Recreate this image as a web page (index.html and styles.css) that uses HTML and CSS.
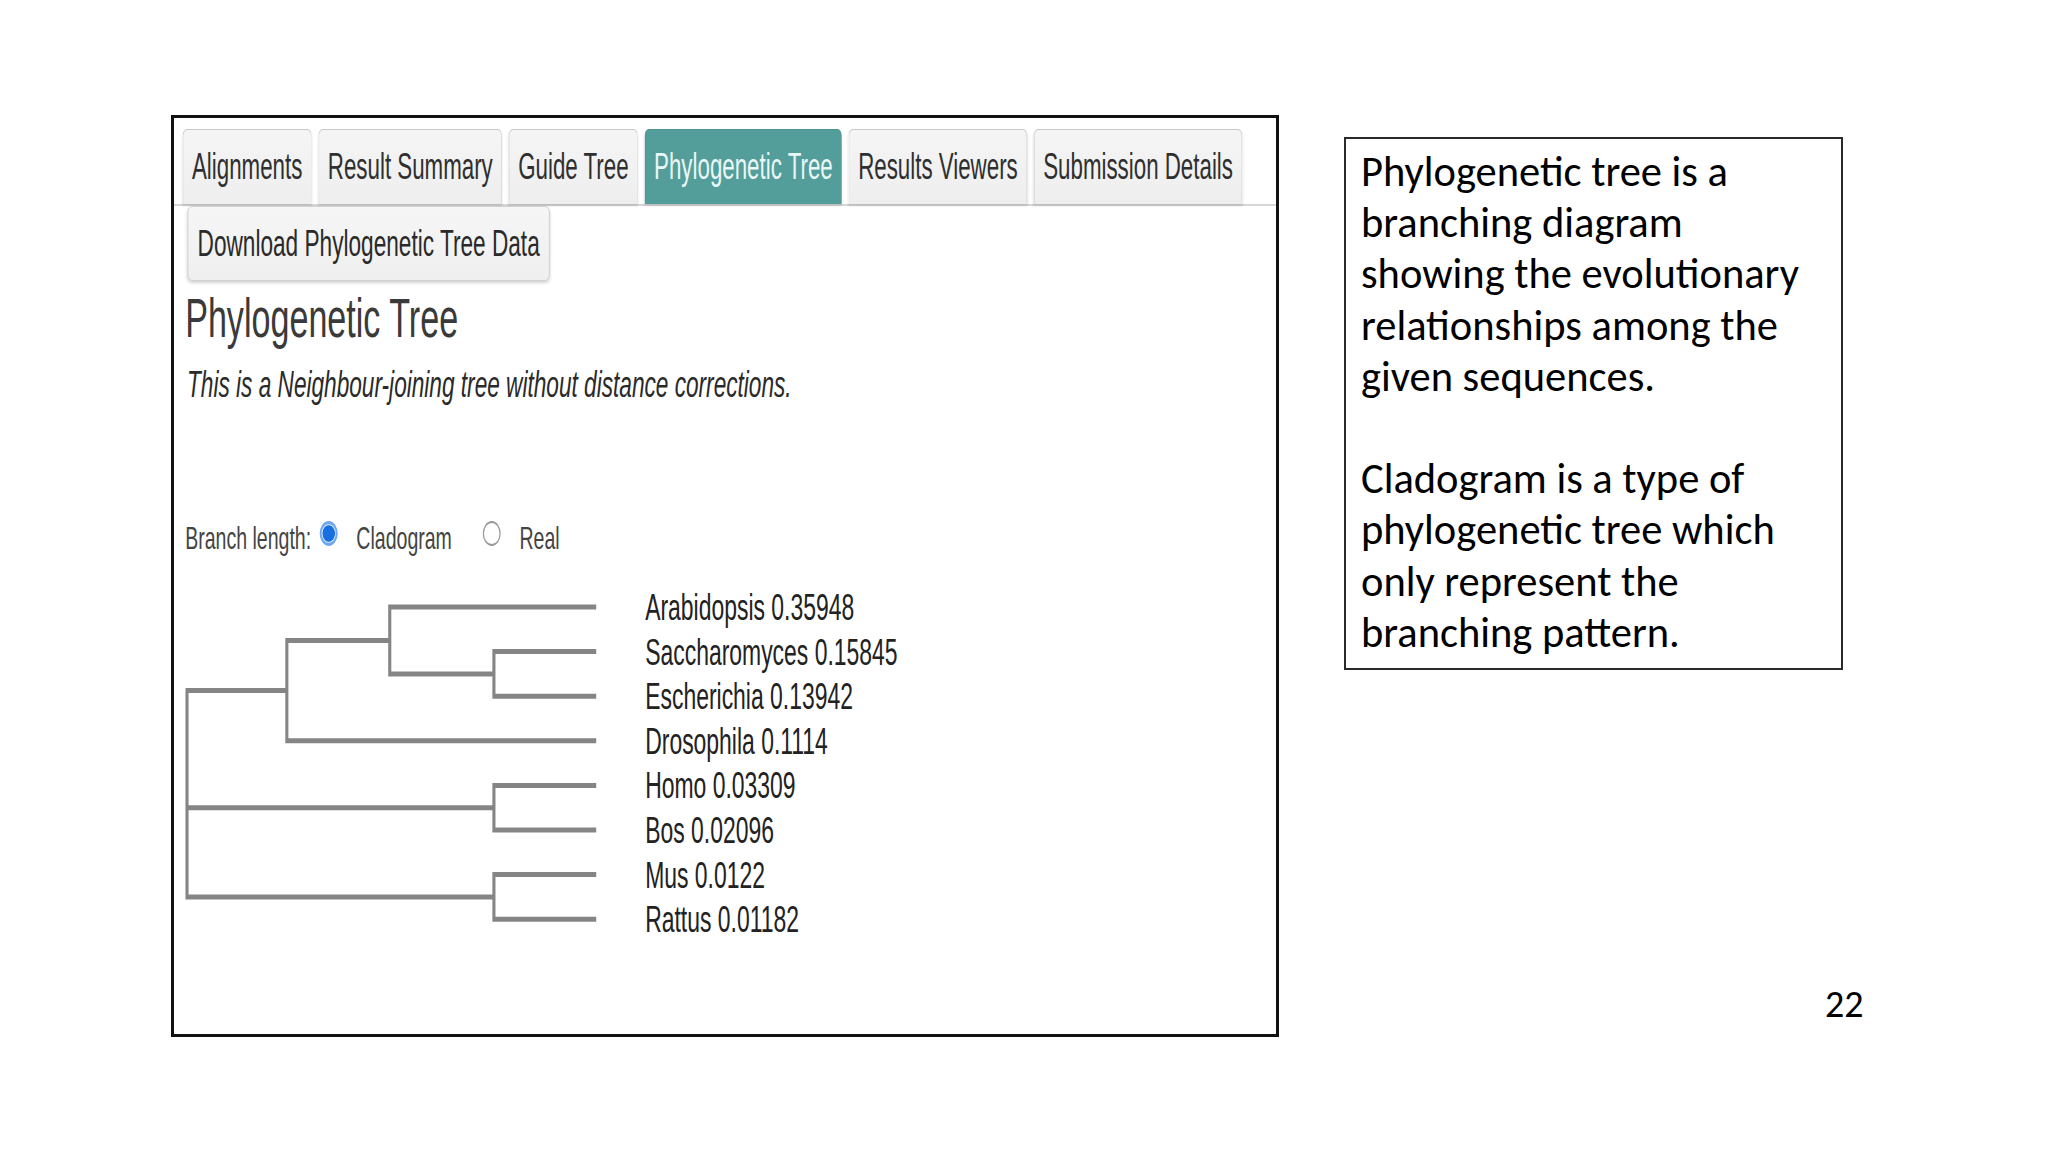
FILE: index.html
```html
<!DOCTYPE html>
<html lang="en">
<head>
<meta charset="utf-8">
<title>Phylogenetic Tree</title>
<link rel="stylesheet" href="styles.css">
</head>
<body>
<div class="slide">
  <div class="row">
    <div class="shot">
      <div class="app">
        <ul class="tabs">
          <li class="tab">Alignments</li>
          <li class="tab">Result Summary</li>
          <li class="tab">Guide Tree</li>
          <li class="tab active">Phylogenetic Tree</li>
          <li class="tab">Results Viewers</li>
          <li class="tab">Submission Details</li>
        </ul>
        <div class="dl">Download Phylogenetic Tree Data</div>
        <h1 class="title">Phylogenetic Tree</h1>
        <p class="sub">This is a Neighbour-joining tree without distance corrections.</p>
        <div class="branch">
          <span class="blabel">Branch length:</span>
          <span class="radio on"></span>
          <span class="opt">Cladogram</span>
          <span class="radio"></span>
          <span class="opt">Real</span>
        </div>
        <svg class="tree" width="1400" height="400" viewBox="0 0 1400 400">
          <g class="edges">
            <path d="M681 91.6 H516 V136.2 H681"/>
            <path d="M681 47 H348 V113.9 H516"/>
            <path d="M348 80.5 H182 V180.8 H681"/>
            <path d="M182 130.6 H21 V336.9 H516"/>
            <path d="M21 247.7 H516"/>
            <path d="M681 225.4 H516 V270 H681"/>
            <path d="M681 314.6 H516 V359.2 H681"/>
          </g>
          <g class="labels">
            <text x="760" y="60">Arabidopsis 0.35948</text>
            <text x="760" y="104.6">Saccharomyces 0.15845</text>
            <text x="760" y="149.2">Escherichia 0.13942</text>
            <text x="760" y="193.8">Drosophila 0.1114</text>
            <text x="760" y="238.4">Homo 0.03309</text>
            <text x="760" y="283">Bos 0.02096</text>
            <text x="760" y="327.6">Mus 0.0122</text>
            <text x="760" y="372.2">Rattus 0.01182</text>
          </g>
        </svg>
      </div>
    </div>
    <div class="note">
      <p>Phylogenetic tree is a<br>branching diagram<br>showing the evolutionary<br>relationships among the<br>given sequences.</p>
      <p class="gap">Cladogram is a type of<br>phylogenetic tree which<br>only represent the<br>branching pattern.</p>
    </div>
  </div>
  <div class="pagenum">22</div>
</div>
</body>
</html>
```
FILE: styles.css
```css
html, body {
  margin: 0;
  background: #ffffff;
}

.slide {
  position: relative;
  width: 2048px;
  height: 1152px;
  box-sizing: border-box;
  padding: 115px 0 0 171px;
  overflow: hidden;
}

.row {
  display: flex;
  align-items: flex-start;
  gap: 65px;
}

/* screenshot frame */
.shot {
  width: 1108px;
  height: 922px;
  box-sizing: border-box;
  border: 3px solid #111111;
  overflow: hidden;
  background: #ffffff;
}

.app {
  width: 1777px;
  transform: scaleX(0.62);
  transform-origin: 0 0;
  padding-top: 11px;
  font-family: "Liberation Sans", Arial, sans-serif;
  color: #333333;
}

.tabs {
  display: flex;
  gap: 11px;
  height: 75px;
  margin: 0;
  padding: 0 0 0 14px;
  list-style: none;
  border-bottom: 2px solid #d6d6d6;
}

.tab {
  height: 75px;
  box-sizing: border-box;
  padding: 0 14px;
  border: 1px solid #c8c8c8;
  border-bottom: none;
  border-radius: 7px 7px 0 0;
  background: linear-gradient(#f5f5f5, #eeeeee);
  font-size: 36px;
  line-height: 74px;
  color: #2f2f2f;
  white-space: nowrap;
  box-shadow: 0 2px 3px rgba(0, 0, 0, 0.12);
}

.tab.active {
  background: #539e9a;
  border-color: #4b928e;
  color: #e9f7f6;
}

.dl {
  display: inline-block;
  margin-left: 22px;
  height: 75px;
  box-sizing: border-box;
  padding: 0 15px;
  border: 1px solid #c6c6c6;
  border-radius: 7px;
  background: linear-gradient(#f6f6f6, #efefef);
  font-size: 36.5px;
  line-height: 73px;
  color: #2a2a2a;
  white-space: nowrap;
  box-shadow: 0 2px 4px rgba(0, 0, 0, 0.18);
  vertical-align: top;
}

.title {
  margin: 7px 0 0 18px;
  font-size: 55px;
  line-height: 60px;
  font-weight: normal;
  color: #3a3a3a;
}

.sub {
  margin: 17px 0 0 21px;
  font-size: 36.5px;
  line-height: 40px;
  font-style: italic;
  color: #2a2a2a;
}

.branch {
  display: flex;
  align-items: center;
  height: 36px;
  margin: 115px 0 0 18px;
  font-size: 31.5px;
  line-height: 36px;
  color: #444444;
}

.radio {
  width: 29px;
  height: 25px;
  box-sizing: border-box;
  border-radius: 50%;
  border: 2px solid #9a9a9a;
  background: #ffffff;
  margin: -9px 30px 0 14px;
}

.radio + .opt + .radio {
  margin-left: 50px;
}

.radio.on {
  border: 3px solid #6fa8f2;
  background: radial-gradient(ellipse, #1a6fe0 0 58%, #cfe2fb 64% 100%);
}

.tree {
  display: block;
  margin-top: 4px;
}

.edges path {
  fill: none;
  stroke: #858585;
  stroke-width: 5;
  stroke-linejoin: miter;
}

.labels text {
  font-family: "Liberation Sans", Arial, sans-serif;
  font-size: 37px;
  fill: #222222;
}

/* explanatory note box */
.note {
  margin-top: 22px;
  width: 499px;
  height: 533px;
  box-sizing: border-box;
  border: 2px solid #2a2a2a;
  padding: 7px 0 0 15px;
  font-family: Carlito, Lato, "Open Sans", sans-serif;
  font-size: 42.5px;
  line-height: 51.2px;
  color: #000000;
  white-space: nowrap;
}

.note p {
  margin: 0;
}

.note p.gap {
  margin-top: 51.2px;
}

.pagenum {
  position: absolute;
  left: 1825px;
  top: 981px;
  font-family: Carlito, Lato, "Open Sans", sans-serif;
  font-size: 38px;
  line-height: 46px;
  color: #000000;
}
```
